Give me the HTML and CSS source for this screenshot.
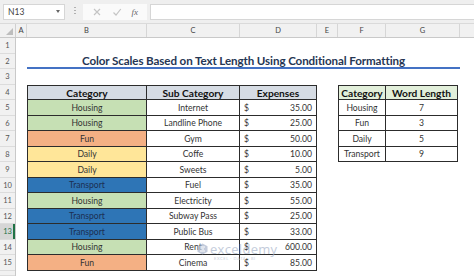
FILE: index.html
```html
<!DOCTYPE html>
<html lang="en">
<head>
  <meta charset="UTF-8" />
  <title>Color Scales Based on Text Length</title>
  <link rel="stylesheet" href="styles.css">
</head>
<body>
  <div class="formula-bar">
    <div class="name-box"><span>N13</span><span class="caret"></span></div>
    <div class="grip"></div>
    <div class="fx-buttons">
      <svg width="10" height="10" viewBox="0 0 10 10"><path d="M2 2 L8 8 M8 2 L2 8" stroke="#c4c4c4" stroke-width="1.2" fill="none"/></svg>
      <svg width="10" height="10" viewBox="0 0 10 10"><path d="M1.5 5.5 L4 8 L8.8 2" stroke="#c4c4c4" stroke-width="1.2" fill="none"/></svg>
      <span class="fx">fx</span>
    </div>
    <div class="formula-input"></div>
  </div>

  <div class="col-headers">
    <div class="corner"></div>
    <div class="ch">A</div>
    <div class="ch">B</div>
    <div class="ch">C</div>
    <div class="ch">D</div>
    <div class="ch">E</div>
    <div class="ch">F</div>
    <div class="ch">G</div>
    <div class="ch last"></div>
  </div>

  <div class="sheet">
    <div class="row-headers">
      <div class="rh">1</div>
      <div class="rh">2</div>
      <div class="rh">3</div>
      <div class="rh">4</div>
      <div class="rh">5</div>
      <div class="rh">6</div>
      <div class="rh">7</div>
      <div class="rh">8</div>
      <div class="rh">9</div>
      <div class="rh">10</div>
      <div class="rh">11</div>
      <div class="rh">12</div>
      <div class="rh active">13</div>
      <div class="rh">14</div>
      <div class="rh">15</div>
      <div class="rh"></div>
    </div>

    <div class="cells">
      <div class="title">Color Scales Based on Text Length Using Conditional Formatting</div>

      <div class="table expenses">
        <div class="cell head">Category</div>
        <div class="cell head">Sub Category</div>
        <div class="cell head">Expenses</div>

        <div class="cell housing">Housing</div><div class="cell">Internet</div><div class="cell money"><span>$</span><span>35.00</span></div>
        <div class="cell housing">Housing</div><div class="cell">Landline Phone</div><div class="cell money"><span>$</span><span>25.00</span></div>
        <div class="cell fun">Fun</div><div class="cell">Gym</div><div class="cell money"><span>$</span><span>50.00</span></div>
        <div class="cell daily">Daily</div><div class="cell">Coffe</div><div class="cell money"><span>$</span><span>10.00</span></div>
        <div class="cell daily">Daily</div><div class="cell">Sweets</div><div class="cell money"><span>$</span><span>5.00</span></div>
        <div class="cell transport">Transport</div><div class="cell">Fuel</div><div class="cell money"><span>$</span><span>35.00</span></div>
        <div class="cell housing">Housing</div><div class="cell">Electricity</div><div class="cell money"><span>$</span><span>55.00</span></div>
        <div class="cell transport">Transport</div><div class="cell">Subway Pass</div><div class="cell money"><span>$</span><span>25.00</span></div>
        <div class="cell transport">Transport</div><div class="cell">Public Bus</div><div class="cell money"><span>$</span><span>33.00</span></div>
        <div class="cell housing">Housing</div><div class="cell">Rent</div><div class="cell money"><span>$</span><span>600.00</span></div>
        <div class="cell fun">Fun</div><div class="cell">Cinema</div><div class="cell money"><span>$</span><span>85.00</span></div>
      </div>

      <div class="table lengths">
        <div class="cell head">Category</div>
        <div class="cell head">Word Length</div>
        <div class="cell">Housing</div><div class="cell">7</div>
        <div class="cell">Fun</div><div class="cell">3</div>
        <div class="cell">Daily</div><div class="cell">5</div>
        <div class="cell">Transport</div><div class="cell">9</div>
      </div>

      <div class="watermark">
        <svg width="11" height="12" viewBox="0 0 11 12"><path d="M5.5 0.5 L10.5 3.2 L10.5 8.8 L5.5 11.5 L0.5 8.8 L0.5 3.2 Z" fill="#aab6cc"/><path d="M3 4 L8 4 M3 6 L7 6 M3 8 L8 8" stroke="#fff" stroke-width="1"/></svg>
        <div class="wm-text">
          <span class="wm-name">exceldemy</span>
          <span class="wm-tag">EXCEL · DATA · BI</span>
        </div>
      </div>
    </div>
  </div>
</body>
</html>
```

FILE: styles.css
```css
* {
  margin: 0;
  padding: 0;
  box-sizing: border-box;
}

body {
  width: 474px;
  height: 276px;
  overflow: hidden;
  background: #fff;
  font-family: 'Lato', 'Liberation Sans', sans-serif;
  color: #222;
}

/* formula bar */
.formula-bar {
  height: 24px;
  background: #efefef;
  display: flex;
  align-items: center;
  padding: 0 0 0 3px;
  border-bottom: 1px solid #dadada;
}

.name-box {
  width: 62px;
  height: 16px;
  background: #fff;
  border: 1px solid #d6d6d6;
  display: flex;
  align-items: center;
  justify-content: space-between;
  padding: 0 4px 0 4px;
  font-size: 8.5px;
  color: #444;
}

.caret {
  width: 0;
  height: 0;
  border-left: 2.5px solid transparent;
  border-right: 2.5px solid transparent;
  border-top: 3px solid #666;
}

.grip {
  width: 2px;
  height: 9px;
  margin: 0 7px 0 9px;
  background: repeating-linear-gradient(#b0b0b0 0 1px, transparent 1px 3px);
}

.fx-buttons {
  width: 64px;
  height: 16px;
  background: #fafafa;
  display: flex;
  align-items: center;
  justify-content: space-around;
  padding: 0 4px;
}

.fx {
  font-family: 'Liberation Serif', serif;
  font-style: italic;
  font-size: 9px;
  color: #666;
}

.formula-input {
  flex: 1;
  height: 16px;
  margin-left: 3px;
  background: #fff;
  border: 1px solid #d6d6d6;
  border-right: none;
}

/* column headers */
.col-headers {
  display: grid;
  grid-template-columns: 16px 11px 120px 93px 77px 21px 48px 74px 1fr;
  height: 14px;
  background: #f1f1f1;
  border-bottom: 1px solid #c9c9c9;
}

.corner {
  position: relative;
  border-right: 1px solid #d0d0d0;
}

.corner::after {
  content: '';
  position: absolute;
  right: 2px;
  bottom: 2px;
  border-left: 7px solid transparent;
  border-bottom: 7px solid #bdbdbd;
}

.ch {
  font-size: 7.5px;
  color: #444;
  display: flex;
  align-items: center;
  justify-content: center;
  border-right: 1px solid #d6d6d6;
}

.ch.last {
  border-right: none;
}

/* sheet body */
.sheet {
  display: flex;
}

.row-headers {
  width: 16px;
  display: grid;
  grid-template-rows: 16px 15px 16px repeat(6, 15px 16px) 5px;
  background: #f1f1f1;
  border-right: 1px solid #c9c9c9;
}

.rh {
  font-size: 7.5px;
  color: #555;
  display: flex;
  align-items: center;
  justify-content: center;
  border-bottom: 1px solid #dcdcdc;
}

.rh.active {
  background: #d6d6d6;
  color: #217346;
  box-shadow: inset -2px 0 0 #217346;
}

.cells {
  position: relative;
  flex: 1;
  display: grid;
  grid-template-columns: 11px 120px 93px 77px 21px 48px 74px 1fr;
  grid-template-rows: 16px 15px 16px repeat(6, 15px 16px) 5px;
}

.title {
  grid-column: 2 / 8;
  grid-row: 2;
  border-bottom: 2px solid #4472c4;
  text-align: center;
  font-weight: 700;
  font-size: 11.6px;
  line-height: 13px;
  color: #263654;
  letter-spacing: -0.1px;
}

/* tables */
.table {
  display: grid;
  border-top: 1px solid #2c2c2c;
  border-left: 1px solid #2c2c2c;
  font-size: 8.6px;
  color: #333;
}

.expenses {
  grid-column: 2 / 5;
  grid-row: 4 / 16;
  grid-template-columns: 119px 93px 77px;
  grid-template-rows: 14px repeat(5, 16px 15px) 16px;
}

.lengths {
  grid-column: 6 / 8;
  grid-row: 4 / 9;
  width: 120px;
  grid-template-columns: 47px 72px;
  grid-template-rows: 14px 16px 15px 16px 15px;
}

.cell {
  border-right: 1px solid #2c2c2c;
  border-bottom: 1px solid #2c2c2c;
  display: flex;
  align-items: center;
  justify-content: center;
  white-space: nowrap;
}

.cell.head {
  font-weight: 700;
  font-size: 10.2px;
  color: #111;
}

.expenses .head {
  background: #d6dce4;
}

.lengths .head {
  background: #e2efda;
}

.housing {
  background: #c6e0b4;
}

.fun {
  background: #f4b084;
}

.daily {
  background: #ffe699;
}

.transport {
  background: #2e75b6;
  color: #1c2f52;
}

.money {
  justify-content: space-between;
  padding: 0 4px 0 4px;
}

/* watermark */
.watermark {
  position: absolute;
  left: 181px;
  top: 205px;
  display: flex;
  align-items: flex-start;
  gap: 2px;
  opacity: 0.7;
}

.wm-text {
  display: flex;
  flex-direction: column;
}

.wm-name {
  font-family: 'Open Sans', sans-serif;
  font-size: 13px;
  line-height: 13px;
  color: #aab6cc;
  letter-spacing: 0.3px;
}

.wm-tag {
  font-size: 4px;
  line-height: 5px;
  color: #b7c0d2;
  letter-spacing: 0.6px;
  margin-left: 4px;
}
```
